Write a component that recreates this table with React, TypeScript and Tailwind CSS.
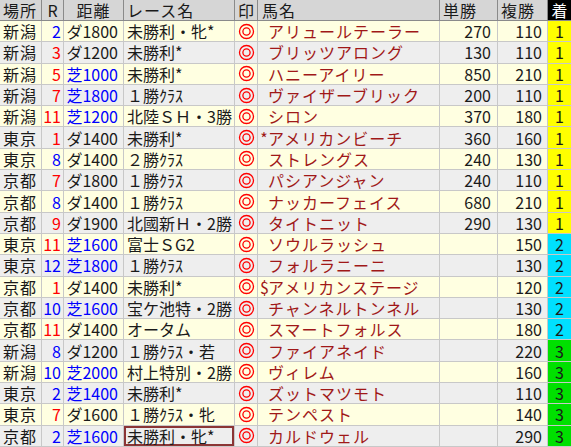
import React from 'react';

type Row = {
    place: string;
    r: number;
    dist: string;
    race: string;
    horse: string;
    win: string;
    show: string;
    rank: number;
};

const rows: Row[] = [
    { place: '新潟', r: 2, dist: 'ダ1800', race: '未勝利・牝*', horse: 'アリュールテーラー', win: '270', show: '110', rank: 1 },
    { place: '新潟', r: 3, dist: 'ダ1200', race: '未勝利*', horse: 'ブリッツアロング', win: '130', show: '110', rank: 1 },
    { place: '新潟', r: 5, dist: '芝1000', race: '未勝利*', horse: 'ハニーアイリー', win: '850', show: '210', rank: 1 },
    { place: '新潟', r: 7, dist: '芝1800', race: '１勝ｸﾗｽ', horse: 'ヴァイザーブリック', win: '200', show: '110', rank: 1 },
    { place: '新潟', r: 11, dist: '芝1200', race: '北陸ＳＨ・3勝', horse: 'シロン', win: '370', show: '180', rank: 1 },
    { place: '東京', r: 1, dist: 'ダ1400', race: '未勝利*', horse: '*アメリカンビーチ', win: '360', show: '160', rank: 1 },
    { place: '東京', r: 8, dist: 'ダ1400', race: '２勝ｸﾗｽ', horse: 'ストレングス', win: '240', show: '130', rank: 1 },
    { place: '京都', r: 7, dist: 'ダ1800', race: '１勝ｸﾗｽ', horse: 'パシアンジャン', win: '240', show: '110', rank: 1 },
    { place: '京都', r: 8, dist: 'ダ1400', race: '１勝ｸﾗｽ', horse: 'ナッカーフェイス', win: '680', show: '210', rank: 1 },
    { place: '京都', r: 9, dist: 'ダ1900', race: '北國新Ｈ・2勝', horse: 'タイトニット', win: '290', show: '130', rank: 1 },
    { place: '東京', r: 11, dist: '芝1600', race: '富士ＳG2', horse: 'ソウルラッシュ', win: '', show: '150', rank: 2 },
    { place: '東京', r: 12, dist: '芝1800', race: '１勝ｸﾗｽ', horse: 'フォルラニーニ', win: '', show: '130', rank: 2 },
    { place: '京都', r: 1, dist: 'ダ1400', race: '未勝利*', horse: '$アメリカンステージ', win: '', show: '120', rank: 2 },
    { place: '京都', r: 10, dist: '芝1600', race: '宝ケ池特・2勝', horse: 'チャンネルトンネル', win: '', show: '130', rank: 2 },
    { place: '京都', r: 11, dist: 'ダ1400', race: 'オータム', horse: 'スマートフォルス', win: '', show: '180', rank: 2 },
    { place: '新潟', r: 8, dist: 'ダ1200', race: '１勝ｸﾗｽ・若', horse: 'ファイアネイド', win: '', show: '220', rank: 3 },
    { place: '新潟', r: 10, dist: '芝2000', race: '村上特別・2勝', horse: 'ヴィレム', win: '', show: '160', rank: 3 },
    { place: '東京', r: 2, dist: '芝1400', race: '未勝利*', horse: 'ズットマツモト', win: '', show: '110', rank: 3 },
    { place: '東京', r: 7, dist: 'ダ1600', race: '１勝ｸﾗｽ・牝', horse: 'テンペスト', win: '', show: '140', rank: 3 },
    { place: '京都', r: 2, dist: '芝1600', race: '未勝利・牝*', horse: 'カルドウェル', win: '', show: '290', rank: 3 },
];

const cols = 'grid grid-cols-[42px_22px_60px_111px_23px_182px_58px_50px_23px]';

const rankBg: Record<number, string> = {
    1: 'bg-[#ffff00]',
    2: 'bg-[#00e0ff]',
    3: 'bg-[#00e000]',
};

// red double circle mark
function Mark() {
    return (
        <svg width="17" height="17" viewBox="0 0 17 17">
            <circle cx="8.5" cy="8.5" r="7" fill="none" stroke="#ff0000" strokeWidth="1.3" />
            <circle cx="8.5" cy="8.5" r="3.6" fill="none" stroke="#ff0000" strokeWidth="1.3" />
        </svg>
    );
}

function Horse({ name }: { name: string }) {
    const prefix = name[0] === '*' || name[0] === '$' ? name[0] : '';
    const rest = prefix ? name.slice(1) : name;
    return (
        <span className="flex items-center">
            <span className="inline-block w-[8px] text-center">{prefix}</span>
            <span className="tracking-[1px]">{rest}</span>
        </span>
    );
}

export default function App() {
    const cell = 'flex items-center border-r border-b border-[#c8c8c8] whitespace-nowrap';
    const head = 'flex items-center border-r border-b border-[#8a8a8a] bg-[#d6d6d6] whitespace-nowrap';

    return (
        <div className="w-[571px] h-[447px] overflow-hidden bg-white text-[16px] leading-[18px] text-[#1a1a1a]" style={{ fontFamily: '"Noto Sans CJK JP", "Noto Sans", sans-serif' }}>
            <div className={`${cols} h-[21px]`}>
                <div className={`${head} pl-[3px] tracking-[1px]`}>場所</div>
                <div className={`${head} justify-center`}>R</div>
                <div className={`${head} justify-center tracking-[1px]`}>距離</div>
                <div className={`${head} pl-[3px] tracking-[1px]`}>レース名</div>
                <div className={`${head} justify-center`}>印</div>
                <div className={`${head} pl-[4px] tracking-[1px]`}>馬名</div>
                <div className={`${head} pl-[3px] tracking-[1px]`}>単勝</div>
                <div className={`${head} pl-[3px] tracking-[1px]`}>複勝</div>
                <div className="flex items-center justify-center bg-black text-white border-b border-[#8a8a8a]">着</div>
            </div>
            {rows.map((row, i) => {
                const bg = i % 2 === 0 ? 'bg-[#ffffe1]' : 'bg-[#eeeeee]';
                const last = i === rows.length - 1;
                return (
                    <div key={i} className={`${cols} h-[21.3px] ${bg}`}>
                        <div className={`${cell} pl-[3px] tracking-[1px]`}>{row.place}</div>
                        <div className={`${cell} justify-end pr-[2px] ${row.r % 2 === 0 ? 'text-[#0000ff]' : 'text-[#ff0000]'}`}>
                            {row.r}
                        </div>
                        <div className={`${cell} justify-end pr-[5px] ${row.dist.startsWith('芝') ? 'text-[#0000ff]' : ''}`}>
                            {row.dist}
                        </div>
                        <div className={`${cell} pl-[3px] ${last ? 'shadow-[inset_0_0_0_2px_#8b3535]' : ''}`}>
                            {row.race}
                        </div>
                        <div className={`${cell} justify-center`}>
                            <Mark />
                        </div>
                        <div className={`${cell} text-[#a01818] pl-[2px]`}>
                            <Horse name={row.horse} />
                        </div>
                        <div className={`${cell} justify-end pr-[6px]`}>{row.win}</div>
                        <div className={`${cell} justify-end pr-[5px]`}>{row.show}</div>
                        <div className={`flex items-center justify-center border-b border-[#c8c8c8] ${rankBg[row.rank]}`}>
                            {row.rank}
                        </div>
                    </div>
                );
            })}
        </div>
    );
}
